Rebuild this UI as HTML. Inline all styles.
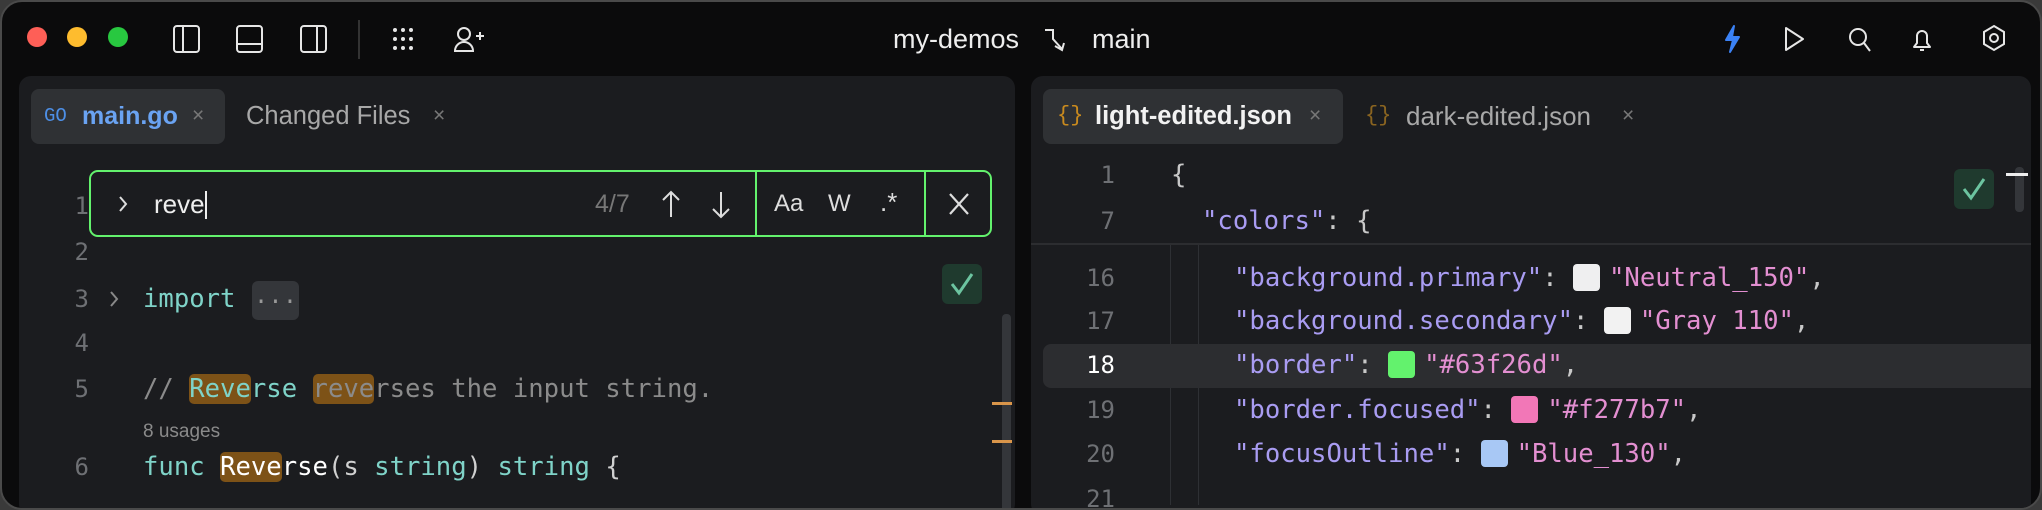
<!DOCTYPE html>
<html><head><meta charset="utf-8"><style>
*{margin:0;padding:0;box-sizing:border-box}
body{width:2042px;height:490px;overflow:hidden;background:#3a3a3a;font-family:"Liberation Sans",sans-serif}
.win{position:absolute;left:0;top:0;width:2042px;height:510px;background:#0b0b0c;border-radius:22px;border:2px solid #4a4a4a;overflow:hidden}
.a{position:absolute;white-space:pre}
.m{font-family:"DejaVu Sans Mono",monospace;font-size:25.6px;line-height:44px}
.pane{position:absolute;background:#1b1c1f;border-radius:12px}
.tab{position:absolute;background:#2f3134;border-radius:8px}
.ln{position:absolute;text-align:right;width:60px;color:#6e7074;font-family:"DejaVu Sans Mono",monospace;font-size:24px;line-height:44px}
.kw{color:#7fd3c8}.cm{color:#8b8b8b}.pl{color:#d0d0d0}.k{color:#a99cf2}.s{color:#e38fd1}.p{color:#c8c8c8}
.hl{background:#7d5217;border-radius:5px}
.sw{display:inline-block;width:27px;height:27px;border-radius:4px;vertical-align:-5px;margin:0 9px 0 0}
svg{position:absolute;overflow:visible}
</style></head><body><div class="win">
<div class="a" style="left:25px;top:25px;width:20px;height:20px;border-radius:50%;background:#fe5f57"></div>
<div class="a" style="left:65px;top:25px;width:20px;height:20px;border-radius:50%;background:#febc2e"></div>
<div class="a" style="left:106px;top:25px;width:20px;height:20px;border-radius:50%;background:#28c840"></div>
<svg style="left:0;top:0" width="2042" height="70" fill="none" stroke="#e6e6e6" stroke-width="2">
<rect x="172" y="24" width="25" height="26" rx="3"/><line x1="181" y1="24" x2="181" y2="50"/>
<rect x="235" y="24" width="25" height="26" rx="3"/><line x1="235" y1="42" x2="260" y2="42"/>
<rect x="299" y="24" width="25" height="26" rx="3"/><line x1="315" y1="24" x2="315" y2="50"/>
<line x1="357" y1="18" x2="357" y2="57" stroke="#333"/>
<g fill="#e6e6e6" stroke="none"><circle cx="393" cy="28" r="2"/><circle cx="401" cy="28" r="2"/><circle cx="409" cy="28" r="2"/><circle cx="393" cy="37" r="2"/><circle cx="401" cy="37" r="2"/><circle cx="409" cy="37" r="2"/><circle cx="393" cy="46" r="2"/><circle cx="401" cy="46" r="2"/><circle cx="409" cy="46" r="2"/></g>
<circle cx="462" cy="32" r="6"/><path d="M453 49a9 9 0 0 1 18 0z"/><path d="M474 34h8M478 30v8"/>
<path d="M1043 28h8v9l9 10M1053 44l7 4 2-7"/>
<path d="M1732 24l-8 14h7l-3 12 9-15h-7z" fill="#3b82f6" stroke="#3b82f6" stroke-linejoin="round"/>
<path d="M1784 26v22l17-11z" stroke-linejoin="round"/>
<circle cx="1856" cy="35" r="8"/><path d="M1862 41l6 8"/>
<path d="M1912 45h16l-3-4v-7a5 5 0 0 0-10 0v7z M1918 48h4" stroke-linejoin="round"/>
<path d="M1992 24l10 6v12l-10 6-10-6v-12z"/><circle cx="1992" cy="36" r="4"/>
</svg>
<div class="a" style="left:891px;top:20px;font-size:27px;color:#eee;line-height:34px">my-demos</div>
<div class="a" style="left:1090px;top:20px;font-size:27px;color:#eee;line-height:34px">main</div>

<div class="pane" style="left:17px;top:74px;width:996px;height:440px"></div>
<div class="tab" style="left:29px;top:87px;width:194px;height:55px"></div>
<div class="a" style="left:42px;top:100px;font-family:'Liberation Mono',monospace;font-size:19px;color:#4d8fe6;line-height:28px">GO</div>
<div class="a" style="left:80px;top:98px;font-size:25px;color:#6aa3f2;line-height:32px;font-weight:bold">main.go</div>
<div class="a" style="left:190px;top:99px;font-size:21px;color:#777;line-height:30px">×</div>
<div class="a" style="left:244px;top:98px;font-size:25.5px;color:#a8a8a8;line-height:32px">Changed Files</div>
<div class="a" style="left:431px;top:99px;font-size:21px;color:#777;line-height:30px">×</div>

<div class="ln" style="left:27px;top:182px">1</div>
<div class="ln" style="left:27px;top:228px">2</div>
<div class="ln" style="left:27px;top:275px">3</div>
<div class="ln" style="left:27px;top:319px">4</div>
<div class="ln" style="left:27px;top:365px">5</div>
<div class="ln" style="left:27px;top:443px">6</div>
<svg style="left:0;top:0" width="200" height="330" fill="none" stroke="#888" stroke-width="2"><path d="M109 290l6 7-6 7"/></svg>
<div class="a m" style="left:141px;top:275px"><span class="kw">import</span></div>
<div class="a" style="left:250px;top:279px;width:47px;height:39px;background:#34363a;border-radius:6px;color:#999;font-family:'Liberation Mono',monospace;font-size:24px;line-height:34px;text-align:center">...</div>
<div class="a m" style="left:141px;top:365px"><span class="cm">// </span><span class="hl kw">Reve</span><span class="kw">rse</span><span class="cm"> </span><span class="hl cm">reve</span><span class="cm">rses the input string.</span></div>
<div class="a" style="left:141px;top:418px;font-size:19px;color:#8a8a8a;line-height:24px">8 usages</div>
<div class="a m" style="left:141px;top:443px"><span class="kw">func</span><span class="pl"> </span><span class="hl" style="color:#fff">Reve</span><span style="color:#fff">rse</span><span class="pl">(s </span><span class="kw">string</span><span class="pl">) </span><span class="kw">string</span><span class="pl"> {</span></div>

<div class="a" style="left:87px;top:168px;width:903px;height:67px;border:2px solid #63f26d;border-radius:9px;background:#1b1c1f"></div>
<div class="a" style="left:753px;top:169px;width:2px;height:65px;background:#63f26d"></div>
<div class="a" style="left:922px;top:169px;width:2px;height:65px;background:#63f26d"></div>
<svg style="left:0;top:0" width="1000" height="240" fill="none" stroke="#ddd" stroke-width="2"><path d="M118 195l6 7-6 7"/><path d="M669 190v25M661 198l8-8 8 8"/><path d="M719 190v25M711 207l8 8 8-8"/><path d="M948 192l18 20M966 192l-18 20" stroke-width="2.2"/></svg>
<div class="a" style="left:152px;top:185px;font-size:26px;color:#eee;line-height:34px">reve<span style="display:inline-block;width:2px;height:28px;background:#eee;vertical-align:-6px"></span></div>
<div class="a" style="left:593px;top:186px;font-size:25px;color:#777;line-height:32px">4/7</div>
<div class="a" style="left:772px;top:186px;font-size:24px;color:#ddd;line-height:32px">Aa</div>
<div class="a" style="left:826px;top:186px;font-size:24px;color:#ddd;line-height:32px">W</div>
<div class="a" style="left:878px;top:184px;font-size:26px;color:#ddd;line-height:32px">.*</div>

<div class="a" style="left:940px;top:262px;width:40px;height:40px;background:#1f3a2e;border-radius:6px"></div>
<svg style="left:0;top:0" width="1000" height="320" fill="none" stroke="#6cc4a0" stroke-width="3"><path d="M950 282l7 9 13-19"/></svg>
<div class="a" style="left:1000px;top:312px;width:9px;height:200px;background:#34363a;border-radius:4px"></div>
<div class="a" style="left:990px;top:400px;width:20px;height:3px;background:#d9954a"></div>
<div class="a" style="left:990px;top:438px;width:20px;height:3px;background:#d9954a"></div>

<div class="pane" style="left:1029px;top:74px;width:1000px;height:440px"></div>
<div class="tab" style="left:1041px;top:87px;width:300px;height:55px"></div>
<div class="a" style="left:1055px;top:99px;font-size:22px;color:#c98a1e;line-height:30px;font-family:'Liberation Mono',monospace">{}</div>
<div class="a" style="left:1093px;top:98px;font-size:25.5px;color:#f2f2f2;line-height:32px;font-weight:bold">light-edited.json</div>
<div class="a" style="left:1307px;top:99px;font-size:21px;color:#777;line-height:30px">×</div>
<div class="a" style="left:1363px;top:99px;font-size:22px;color:#8a6420;line-height:30px;font-family:'Liberation Mono',monospace">{}</div>
<div class="a" style="left:1404px;top:98px;font-size:26px;color:#a8a8a8;line-height:32px">dark-edited.json</div>
<div class="a" style="left:1620px;top:99px;font-size:21px;color:#777;line-height:30px">×</div>

<div class="a" style="left:1029px;top:241px;width:1000px;height:2px;background:#2c2d30"></div>
<div class="a" style="left:1168px;top:243px;width:1px;height:260px;background:#2e3034"></div>
<div class="a" style="left:1196px;top:243px;width:1px;height:260px;background:#2e3034"></div>
<div class="a" style="left:1041px;top:342px;width:988px;height:44px;background:#2c2d30;border-radius:8px 0 0 8px"></div>

<div class="ln" style="left:1053px;top:151px">1</div>
<div class="ln" style="left:1053px;top:197px">7</div>
<div class="ln" style="left:1053px;top:254px">16</div>
<div class="ln" style="left:1053px;top:297px">17</div>
<div class="ln" style="left:1053px;top:341px;color:#fff">18</div>
<div class="ln" style="left:1053px;top:386px">19</div>
<div class="ln" style="left:1053px;top:430px">20</div>
<div class="ln" style="left:1053px;top:475px">21</div>

<div class="a m p" style="left:1169px;top:151px">{</div>
<div class="a m" style="left:1200px;top:197px"><span class="k">"colors"</span><span class="p">: {</span></div>
<div class="a m" style="left:1232px;top:254px"><span class="k">"background.primary"</span><span class="p">: </span><span class="sw" style="background:#efeff0"></span><span class="s">"Neutral_150"</span><span class="p">,</span></div>
<div class="a m" style="left:1232px;top:297px"><span class="k">"background.secondary"</span><span class="p">: </span><span class="sw" style="background:#f2f2f2"></span><span class="s">"Gray 110"</span><span class="p">,</span></div>
<div class="a m" style="left:1232px;top:341px"><span class="k">"border"</span><span class="p">: </span><span class="sw" style="background:#63f26d"></span><span class="s">"#63f26d"</span><span class="p">,</span></div>
<div class="a m" style="left:1232px;top:386px"><span class="k">"border.focused"</span><span class="p">: </span><span class="sw" style="background:#f277b7"></span><span class="s">"#f277b7"</span><span class="p">,</span></div>
<div class="a m" style="left:1232px;top:430px"><span class="k">"focusOutline"</span><span class="p">: </span><span class="sw" style="background:#a8c8f5"></span><span class="s">"Blue_130"</span><span class="p">,</span></div>

<div class="a" style="left:1952px;top:167px;width:40px;height:40px;background:#1f3a2e;border-radius:6px"></div>
<svg style="left:0;top:0" width="2042" height="220" fill="none" stroke="#6cc4a0" stroke-width="3"><path d="M1962 187l7 9 13-19"/></svg>
<div class="a" style="left:2013px;top:165px;width:9px;height:45px;background:#34363a;border-radius:4px"></div>
<div class="a" style="left:2004px;top:171px;width:22px;height:3px;background:#eee"></div>
</div></body></html>
